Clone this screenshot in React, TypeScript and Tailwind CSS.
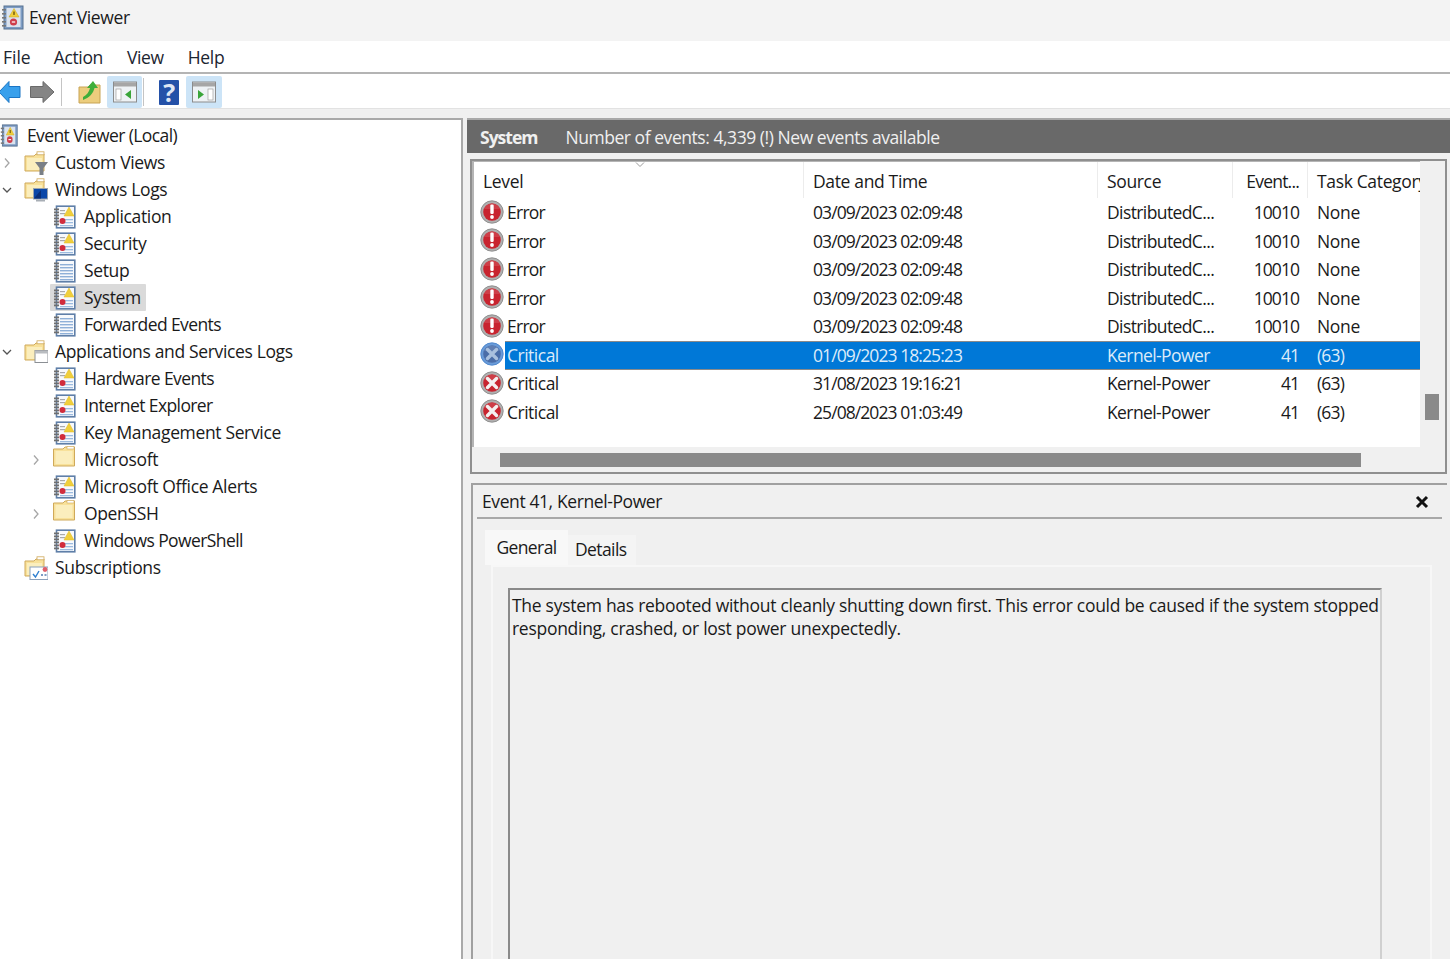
import React from "react";

const font = { fontFamily: '"Open Sans", "Noto Sans", sans-serif' };

function LogIcon({ plain = false }: { plain?: boolean }) {
  return (
    <svg width="23" height="24" viewBox="0 0 23 24" className="shrink-0">
      <rect x="3.5" y="1.2" width="18.3" height="21.6" fill="#f7f9fc" stroke="#5f7fa8" strokeWidth="1.6" />
      {[3.5, 6.5, 9.5, 12.5, 15.5, 18.5].map((y) => (
        <rect key={y} x="1" y={y} width="5" height="1.8" fill="#6f6f6f" />
      ))}
      {plain ? (
        [5, 8, 11, 14, 17, 20].map((y) => <rect key={y} x="7" y={y} width="13" height="1.4" fill="#8fb0d8" />)
      ) : (
        <>
          {[14, 17, 20].map((y) => (
            <rect key={y} x="7" y={y} width="13" height="1.3" fill="#9dbbdf" />
          ))}
          <rect x="7" y="5" width="5" height="1.2" fill="#aaa" />
          <rect x="7" y="8" width="5" height="1.2" fill="#aaa" />
          <path d="M16 2 L21 11 H11 Z" fill="#f0cf3c" stroke="#e0b820" strokeWidth="0.5" />
          <circle cx="9.5" cy="16" r="3" fill="#d12c3c" />
        </>
      )}
    </svg>
  );
}

function RootIcon({ small }: { small?: boolean }) {
  return (
    <svg width={small ? 18 : 23} height={small ? 23 : 25} viewBox="0 0 23 25" preserveAspectRatio="none" className="shrink-0">
      <rect x="3" y="1" width="19" height="23" fill="#7d9cc4" stroke="#56708f" strokeWidth="1" />
      <rect x="5.5" y="3" width="14" height="19" fill="#dbe3ee" />
      {[4, 8, 12, 16, 20].map((y) => (
        <rect key={y} x="1" y={y} width="4" height="1.6" fill="#777" />
      ))}
      <path d="M13 3.5 L18 12 H8 Z" fill="#f0cf3c" stroke="#c9a71c" strokeWidth="0.5" />
      <rect x="12.4" y="6.5" width="1.2" height="3.4" fill="#5a4300" />
      <circle cx="12.5" cy="17" r="3.6" fill="#cf3d4b" />
      <rect x="10.8" y="16.4" width="3.4" height="1.2" fill="#fff" />
    </svg>
  );
}

function Folder({ badge }: { badge?: "filter" | "pc" | "app" | "sub" }) {
  return (
    <svg width="24" height="24" viewBox="0 0 24 24" className="shrink-0">
      <path d="M1 5 V20 H20 V3 H12 L10 5 Z" fill="#f8e19a" stroke="#cfa95a" strokeWidth="1" />
      <rect x="3" y="7" width="15" height="12" fill="#fbeebd" />
      <rect x="13" y="0.8" width="7" height="3" fill="#fff" stroke="#cfa95a" strokeWidth="0.8" />
      {badge === "filter" && <path d="M11 11 H24 L19.5 17 V24 H15.5 V17 Z" fill="#7a7f86" />}
      {badge === "pc" && (
        <>
          <rect x="9.5" y="10.5" width="14" height="10.5" fill="#0b47a8" stroke="#9aa3ad" strokeWidth="1" />
          <path d="M10 20.5 L17 12 V20.5 Z" fill="#0a2f78" />
          <rect x="12" y="21.5" width="9" height="2" fill="#a8aeb5" />
        </>
      )}
      {badge === "app" && (
        <>
          <rect x="11" y="10.5" width="13" height="12" fill="#fff" stroke="#8b8f94" strokeWidth="1" />
          <rect x="11" y="10.5" width="13" height="3" fill="#b9bcc0" />
        </>
      )}
      {badge === "sub" && (
        <>
          <rect x="6" y="11" width="18" height="12.5" fill="#fff" stroke="#8aa0bb" strokeWidth="1" />
          <path d="M9 18 L11.5 21 L15 15" fill="none" stroke="#2f7fd0" strokeWidth="1.4" />
          <circle cx="21" cy="13.5" r="2.4" fill="#e0606a" />
          <rect x="17" y="18" width="2" height="2" fill="#7d9cc4" />
          <rect x="20.5" y="18" width="2" height="2" fill="#7d9cc4" />
        </>
      )}
    </svg>
  );
}

function PlainFolder() {
  return (
    <svg width="23" height="21" viewBox="0 0 23 21" className="mb-[6px] shrink-0">
      <path d="M0.5 3 V20 H21.5 V1 H12 L10 3 Z" fill="#f8e19a" stroke="#cfa95a" strokeWidth="1" />
      <rect x="2.5" y="5" width="17" height="13" fill="#fbeebd" />
      <rect x="14" y="0.6" width="7" height="2.4" fill="#fff" stroke="#cfa95a" strokeWidth="0.6" />
    </svg>
  );
}

function Chevron({ open }: { open?: boolean }) {
  return (
    <svg width="14" height="14" viewBox="0 0 14 14" className="shrink-0">
      <path d={open ? "M3 5 L7 9 L11 5" : "M5 2.5 L9 7 L5 11.5"} fill="none" stroke={open ? "#555" : "#a6a6a6"} strokeWidth="1.3" />
    </svg>
  );
}

function TreeRow({ level, label, icon, chevron, selected, tight }: { level: 0 | 1 | 2; label: string; icon: React.ReactNode; chevron?: "open" | "closed"; selected?: boolean; tight?: boolean }) {
  const pad = level === 2 ? "pl-[29px]" : "pl-0";
  return (
    <div className={`flex h-[27px] items-center ${pad}`}>
      {level > 0 && (
        <div className="flex w-[24px] shrink-0 items-center">
          {chevron && <Chevron open={chevron === "open"} />}
        </div>
      )}
      <div className={`flex h-[27px] items-center rounded-[1px] pr-[5px] ${selected ? "-ml-[3px] bg-[#dadada] pl-[3px]" : ""}`}>
        {icon}
        <span className={`whitespace-nowrap text-[#1a1a1a] ${tight ? "tracking-[-0.6px]" : ""} ${level === 0 ? "ml-[9px]" : level === 1 ? "ml-[7px]" : "ml-[8px]"}`}>{label}</span>
      </div>
    </div>
  );
}

function StatusIcon({ type, active }: { type: "error" | "critical"; active?: boolean }) {
  const ring = active ? "#6a9bd8" : "#b0b0b0";
  const fill = active ? "#4a6da8" : "#c8242f";
  return (
    <svg width="24" height="24" viewBox="0 0 24 24" className="shrink-0">
      <circle cx="12" cy="12" r="11.2" fill={ring} stroke={active ? "#4a84cc" : "#8a8a8a"} strokeWidth="0.9" />
      <circle cx="12" cy="12" r="8.8" fill={fill} />
      <path d="M4 9 A8.8 8.8 0 0 1 20 9 Z" fill="#fff" fillOpacity="0.12" />
      {type === "error" ? (
        <>
          <rect x="10.3" y="4.5" width="3.4" height="9.5" rx="1.2" fill="#fff" />
          <circle cx="12" cy="17" r="1.9" fill="#fff" />
        </>
      ) : (
        <path d="M7.5 7.5 L16.5 16.5 M16.5 7.5 L7.5 16.5" stroke={active ? "#a9c0de" : "#f4f0f0"} strokeWidth="3.4" strokeLinecap="round" />
      )}
    </svg>
  );
}

type Ev = { level: string; date: string; source: string; id: string; cat: string; sel?: boolean };
const events: Ev[] = [
  ...Array.from({ length: 5 }, () => ({ level: "Error", date: "03/09/2023 02:09:48", source: "DistributedC...", id: "10010", cat: "None" })),
  { level: "Critical", date: "01/09/2023 18:25:23", source: "Kernel-Power", id: "41", cat: "(63)", sel: true },
  { level: "Critical", date: "31/08/2023 19:16:21", source: "Kernel-Power", id: "41", cat: "(63)" },
  { level: "Critical", date: "25/08/2023 01:03:49", source: "Kernel-Power", id: "41", cat: "(63)" },
];

function EventRow({ e }: { e: Ev }) {
  const active = !!e.sel;
  return (
    <div className="flex h-[28.5px] items-center">
      <div className="mb-[2px] flex w-[31px] shrink-0 justify-center pl-[4px]">
        <StatusIcon type={e.level === "Error" ? "error" : "critical"} active={active} />
      </div>
      <div className={`flex h-[28.5px] flex-1 items-center ${active ? "border-y border-[#8a8a8a] bg-[#0078d7] text-[#dcebf9]" : "text-[#1a1a1a]"}`}>
        <div className={`w-[299px] shrink-0 pl-[2px] ${e.level === "Error" ? "tracking-[-0.75px]" : "tracking-[-0.5px]"}`}>{e.level}</div>
        <div className="w-[294px] shrink-0 pl-[9px] tracking-[-0.93px]">{e.date}</div>
        <div className="w-[135px] shrink-0 pl-[9px] tracking-[-0.6px]">{e.source}</div>
        <div className="w-[66px] shrink-0 text-right tracking-[-0.95px]">{e.id}</div>
        <div className={`pl-[18px] ${e.cat === "None" ? "" : "tracking-[-0.8px]"}`}>{e.cat}</div>
      </div>
    </div>
  );
}

function HeaderCell({ w, children, divider = true, right }: { w: string; children: React.ReactNode; divider?: boolean; right?: boolean }) {
  return (
    <div className={`flex h-full shrink-0 items-center overflow-hidden whitespace-nowrap pt-[4px] ${w} ${divider ? "border-r border-[#ececec]" : ""} ${right ? "justify-end pr-[8px] tracking-[-0.8px]" : "pl-[9px]"}`}>
      {children}
    </div>
  );
}

export default function App() {
  return (
    <div className="flex h-[959px] w-[1450px] flex-col overflow-hidden bg-[#f0f0f0] text-[17.5px] leading-none tracking-[-0.35px]" style={font}>
      {/* title bar */}
      <div className="flex h-[41px] shrink-0 items-center bg-[#f3f3f3] pb-[6px] pl-[1px]">
        <RootIcon />
        <span className="ml-[5px] text-[#1a1a1a]">Event Viewer</span>
      </div>
      {/* menu */}
      <div className="flex h-[33px] shrink-0 items-center gap-[24px] border-b-2 border-[#b4b4b4] bg-white pl-[3px] pt-[2px] text-[#1c2530]">
        <span className="-mr-[1px] tracking-normal">File</span>
        <span>Action</span>
        <span>View</span>
        <span>Help</span>
      </div>
      {/* toolbar */}
      <div className="flex h-[34px] shrink-0 items-center bg-white pt-[2px]">
        <svg width="22" height="24" viewBox="0 0 22 24" className="shrink-0">
          <path d="M-1 12 L9 1.5 V6.5 H20 V17.5 H9 V22.5 Z" fill="#39a0ec" stroke="#1b75c4" strokeWidth="1" />
        </svg>
        <svg width="24" height="24" viewBox="0 0 24 24" className="ml-[8px] shrink-0">
          <path d="M24 12 L13 1.5 V6.5 H0.5 V17.5 H13 V22.5 Z" fill="#858585" stroke="#6a6a6a" strokeWidth="1" />
        </svg>
        <div className="ml-[7px] h-[28px] w-px bg-[#c4c4c4]" />
        <svg width="24" height="24" viewBox="0 0 24 24" className="ml-[16px] shrink-0">
          <path d="M1 7 V23 H22 V5 H12 L10 7 Z" fill="#eccd7d" stroke="#c8a354" strokeWidth="1" />
          <path d="M5 17 C9 15 11 12 12 8 L9 8 L15 1 L20 8 L16.5 8 C15.5 13 11 18 5 20 Z" fill="#3fae3a" />
        </svg>
        <div className="ml-[5px] flex h-[32px] w-[35px] items-center justify-center rounded-[2px] bg-[#cce4f7]">
          <svg width="24" height="22" viewBox="0 0 24 22">
            <rect x="0.5" y="1" width="23" height="20" fill="#eef2f5" stroke="#8c8c8c" />
            <rect x="1" y="1.5" width="22" height="4" fill="#a6a6a6" />
            <rect x="3" y="8" width="5" height="11" fill="#fff" stroke="#a0a0a0" strokeWidth="0.7" />
            <path d="M18 9 V18 L12 13.5 Z" fill="#3aa53a" />
          </svg>
        </div>
        <div className="ml-[1px] h-[28px] w-px bg-[#c4c4c4]" />
        <div className="ml-[15px] flex h-[25px] w-[20px] items-center justify-center rounded-[1px] bg-[#2451a8] text-[25px] font-bold text-[#dfe6f3]">?</div>
        <div className="ml-[7px] flex h-[32px] w-[36px] items-center justify-center rounded-[2px] bg-[#cce4f7]">
          <svg width="24" height="22" viewBox="0 0 24 22">
            <rect x="0.5" y="1" width="23" height="20" fill="#eef2f5" stroke="#8c8c8c" />
            <rect x="1" y="1.5" width="22" height="4" fill="#a6a6a6" />
            <rect x="16" y="8" width="5" height="11" fill="#fff" stroke="#a0a0a0" strokeWidth="0.7" />
            <path d="M6 9 V18 L12 13.5 Z" fill="#3aa53a" />
          </svg>
        </div>
      </div>
      <div className="h-[10px] shrink-0 border-t border-[#e2e2e2] bg-[#f0f0f0]" />

      <div className="flex min-h-0 flex-1">
        {/* tree */}
        <div className="h-full w-[463px] shrink-0 border-r-2 border-t-2 border-[#a9a9a9] bg-white pt-[2px]">
          <TreeRow level={0} label="Event Viewer (Local)" icon={<RootIcon small />} tight />
          <TreeRow level={1} chevron="closed" label="Custom Views" icon={<Folder badge="filter" />} />
          <TreeRow level={1} chevron="open" label="Windows Logs" icon={<Folder badge="pc" />} />
          <TreeRow level={2} label="Application" icon={<LogIcon />} />
          <TreeRow level={2} label="Security" icon={<LogIcon />} />
          <TreeRow level={2} label="Setup" icon={<LogIcon plain />} />
          <TreeRow level={2} label="System" icon={<LogIcon />} selected />
          <TreeRow level={2} label="Forwarded Events" icon={<LogIcon plain />} tight />
          <TreeRow level={1} chevron="open" label="Applications and Services Logs" icon={<Folder badge="app" />} />
          <TreeRow level={2} label="Hardware Events" icon={<LogIcon />} tight />
          <TreeRow level={2} label="Internet Explorer" icon={<LogIcon />} tight />
          <TreeRow level={2} label="Key Management Service" icon={<LogIcon />} />
          <TreeRow level={2} chevron="closed" label="Microsoft" icon={<PlainFolder />} />
          <TreeRow level={2} label="Microsoft Office Alerts" icon={<LogIcon />} />
          <TreeRow level={2} chevron="closed" label="OpenSSH" icon={<PlainFolder />} />
          <TreeRow level={2} label="Windows PowerShell" icon={<LogIcon />} tight />
          <TreeRow level={1} label="Subscriptions" icon={<Folder badge="sub" />} />
        </div>

        {/* right */}
        <div className="ml-[4px] flex min-w-0 flex-1 flex-col">
          <div className="flex h-[35px] shrink-0 items-center gap-[28px] border-t-2 border-[#a9a9a9] bg-[#696969] pl-[13px] pt-[2px] text-[#f0f0f0]">
            <span className="font-bold tracking-[-1px]">System</span>
            <span className="tracking-[-0.45px]">Number of events: 4,339 (!) New events available</span>
          </div>

          {/* list */}
          <div className="ml-[3px] mr-[3px] mt-[6px] flex h-[315px] shrink-0 flex-col border-2 border-[#8f8f8f]">
            <div className="flex min-h-0 flex-1">
              <div className="relative w-[948px] shrink-0 border-l-2 border-t border-[#b5b5b5] bg-white">
                <svg width="10" height="6" viewBox="0 0 10 6" className="absolute left-[161px] top-0">
                  <path d="M1 0.5 L5 4.5 L9 0.5" fill="none" stroke="#9a9a9a" strokeWidth="1" />
                </svg>
                <div className="flex h-[36px] text-[#1a1a1a]">
                  <HeaderCell w="w-[330px]">Level</HeaderCell>
                  <HeaderCell w="w-[294px]">Date and Time</HeaderCell>
                  <HeaderCell w="w-[135px]">Source</HeaderCell>
                  <HeaderCell w="w-[75px]" right>Event...</HeaderCell>
                  <HeaderCell w="w-[112px]" divider={false}>Task Category</HeaderCell>
                </div>
                <div className="pt-[0.5px]">
                  {events.map((e, i) => (
                    <EventRow key={i} e={e} />
                  ))}
                </div>
              </div>
              <div className="flex flex-1 flex-col items-center bg-[#f0f0f0] pr-[1px] pt-[233px]">
                <div className="h-[26px] w-[14px] bg-[#8a8a8a]" />
              </div>
            </div>
            <div className="flex h-[25px] shrink-0 items-center bg-[#f0f0f0] pl-[28px]">
              <div className="h-[14px] w-[861px] bg-[#8a8a8a]" />
            </div>
          </div>

          {/* detail */}
          <div className="ml-[4px] mr-[3px] mt-[9px] flex min-h-0 flex-1 flex-col border-l-2 border-t-2 border-[#a0a0a0] bg-[#f0f0f0] pl-[4px]">
            <div className="mr-[5px] flex h-[34px] shrink-0 items-center justify-between border-b-2 border-[#a8a8a8] pt-[2px] text-[#1a1a1a]">
              <span className="ml-[5px] tracking-[-0.4px]">Event 41, Kernel-Power</span>
              <svg width="14" height="14" viewBox="0 0 14 14" className="mr-[13px]">
                <path d="M2 2 L12 12 M12 2 L2 12" stroke="#111" strokeWidth="3" />
              </svg>
            </div>
            <div className="ml-[8px] mt-[11px] flex h-[35px] shrink-0 items-end">
              <div className="flex h-[35px] w-[83px] items-center justify-center bg-[#f8f8f8] tracking-[-0.6px] text-[#1a1a1a]">General</div>
              <div className="flex h-[30px] w-[68px] items-center bg-[#f4f4f4] pl-[7px] tracking-[-0.6px] text-[#1a1a1a]">Details</div>
            </div>
            <div className="ml-[14px] mr-[15px] flex min-h-0 flex-1 flex-col border-l-2 border-r-2 border-t-2 border-[#f7f7f7] pl-[15px] pr-[48px] pt-[21px]">
              <div className="flex-1 border-l-2 border-r-2 border-t-2 border-l-[#8a8a8a] border-r-[#d0d0d0] border-t-[#8a8a8a] pl-[2px] pt-[4px] text-[17.5px] leading-[22.5px] tracking-[-0.28px] text-[#1a1a1a]">
                The system has rebooted without cleanly shutting down first. This error could be caused if the system stopped responding, crashed, or lost power unexpectedly.
              </div>
            </div>
          </div>
        </div>
      </div>
    </div>
  );
}
